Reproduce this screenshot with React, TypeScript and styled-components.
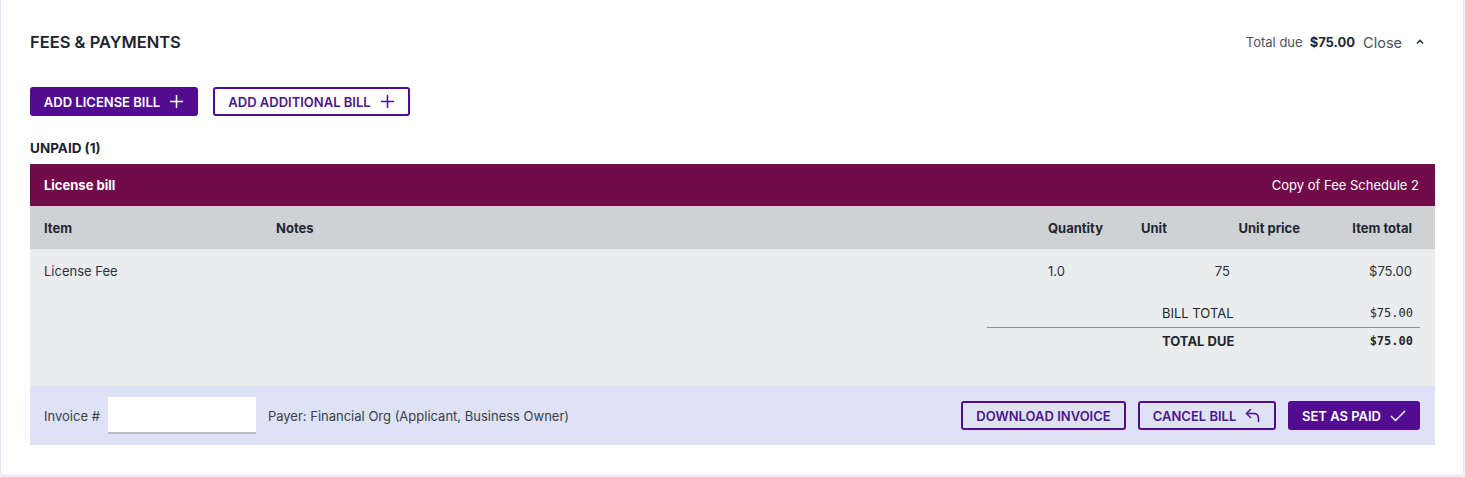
import React from "react";
import styled, { createGlobalStyle } from "styled-components";

const Global = createGlobalStyle`
  html, body { margin: 0; padding: 0; background: #f4f2fb; }
  body { font-family: Inter, "Noto Sans", Arial, sans-serif; color: #1f2733; }
  * { box-sizing: border-box; }
`;

const Card = styled.section`
  width: 1464px;
  height: 476px;
  background: #ffffff;
  border: 1px solid #e7e2f4;
  border-top: none;
  border-radius: 0 0 4px 4px;
  padding: 31px 29px 0 29px;
  display: flex;
  flex-direction: column;
`;

const HeaderRow = styled.div`
  display: flex;
  align-items: center;
  justify-content: space-between;
  height: 22px;
  padding-right: 10px;
`;

const Title = styled.h2`
  margin: 0;
  font-size: 16.5px;
  font-weight: 600;
  color: #1d2430;
`;

const Summary = styled.div`
  display: flex;
  align-items: center;
  gap: 7px;
`;

const SummaryLabel = styled.span`
  font-size: 13px;
  color: #4a525c;
`;

const SummaryValue = styled.span`
  font-size: 13px;
  font-weight: 700;
  color: #1f2733;
`;

const CloseLink = styled.span`
  font-size: 14.5px;
  color: #4a525c;
  display: flex;
  align-items: center;
  gap: 14px;
  margin-left: 1px;
`;

const ActionRow = styled.div`
  display: flex;
  gap: 15px;
  margin-top: 34px;
`;

const Button = styled.button<{ $primary?: boolean; $w: number }>`
  width: ${(p) => p.$w}px;
  height: 29px;
  display: inline-flex;
  align-items: center;
  justify-content: center;
  gap: 9px;
  border-radius: 3px;
  font-family: Inter, "Noto Sans", Arial, sans-serif;
  font-size: 13px;
  font-weight: 600;
  text-transform: uppercase;
  cursor: pointer;
  padding: 0;
  border: 2px solid #520c90;
  background: ${(p) => (p.$primary ? "#520c90" : "transparent")};
  color: ${(p) => (p.$primary ? "#ffffff" : "#4b1687")};
`;

const SectionLabel = styled.div`
  margin-top: 24px;
  font-size: 13.5px;
  font-weight: 700;
  color: #1d2430;
  height: 16px;
  line-height: 16px;
`;

const Table = styled.div`
  margin-top: 8px;
  width: 1405px;
  display: flex;
  flex-direction: column;
`;

const BillHeader = styled.div`
  height: 42px;
  background: #710b4a;
  color: #ffffff;
  display: flex;
  align-items: center;
  justify-content: space-between;
  padding: 0 16px 0 14px;
  font-size: 13px;
`;

const BillName = styled.span`
  font-weight: 700;
`;

const Grid = styled.div<{ $bg: string; $bold?: boolean }>`
  height: 43px;
  background: ${(p) => p.$bg};
  display: grid;
  grid-template-columns: 232px 772px 93px 59px 100px 112px;
  align-items: center;
  padding: 0 22px 0 14px;
  font-size: 13px;
  font-weight: ${(p) => (p.$bold ? 700 : 400)};
  color: ${(p) => (p.$bold ? "#1f2733" : "#2b323c")};
`;

const Cell = styled.span<{ $right?: boolean; $pr?: number }>`
  text-align: ${(p) => (p.$right ? "right" : "left")};
  padding-right: ${(p) => p.$pr ?? 0}px;
  white-space: nowrap;
`;

const TotalsArea = styled.div`
  background: #ebecee;
  height: 94px;
  display: flex;
  justify-content: flex-end;
  padding: 13px 15px 0 0;
`;

const Totals = styled.div`
  width: 433px;
  display: flex;
  flex-direction: column;
`;

const TotalLine = styled.div<{ $strong?: boolean; $divider?: boolean }>`
  display: grid;
  grid-template-columns: 175px auto 1fr;
  align-items: center;
  padding: 0 7px 0 0;
  height: ${(p) => (p.$divider ? 23 : 21)}px;
  align-content: ${(p) => (p.$divider ? "start" : "end")};
  font-size: 13px;
  font-weight: ${(p) => (p.$strong ? 700 : 400)};
  color: #1f2733;
  border-bottom: ${(p) => (p.$divider ? "1px solid #8c9096" : "none")};
`;

const TotalLabel = styled.span`
  grid-column: 2;
  line-height: 16px;
`;

const Money = styled.span`
  grid-column: 3;
  font-family: "DejaVu Sans Mono", "Liberation Mono", monospace;
  font-size: 12px;
  line-height: 16px;
  text-align: right;
`;

const Footer = styled.div`
  height: 59px;
  background: #dde2f6;
  display: flex;
  align-items: center;
  padding: 0 15px 0 14px;
  font-size: 13px;
  color: #3a404a;
`;

const InvoiceInput = styled.input`
  margin-left: 8px;
  width: 148px;
  height: 37px;
  border: none;
  border-bottom: 2px solid #b9bcc2;
  background: #ffffff;
  outline: none;
`;

const Payer = styled.span`
  margin-left: 12px;
  flex: 1;
`;

const FooterActions = styled.div`
  display: flex;
  gap: 12px;
`;

const PlusIcon = () => (
  <svg width="15" height="15" viewBox="0 0 15 15" fill="none" stroke="currentColor" strokeWidth="1.5">
    <path d="M7.5 1v13M1 7.5h13" />
  </svg>
);

const ChevronUp = () => (
  <svg width="8" height="6" viewBox="0 0 8 6" fill="none" stroke="#2b323c" strokeWidth="1.6">
    <path d="M1 4.5L4 1.5L7 4.5" />
  </svg>
);

const UndoIcon = () => (
  <svg width="16" height="15" viewBox="0 0 16 15" fill="none" stroke="currentColor" strokeWidth="1.5" strokeLinecap="round" strokeLinejoin="round">
    <path d="M5.5 1.5L1.5 5.5L5.5 9.5" />
    <path d="M1.5 5.5H8.5C11.5 5.5 13.5 7.5 13.5 10.5V13.5" />
  </svg>
);

const CheckIcon = () => (
  <svg width="16" height="12" viewBox="0 0 16 12" fill="none" stroke="currentColor" strokeWidth="1.4">
    <path d="M1 6L5.5 10.5L15 1" />
  </svg>
);

export default function App() {
  return (
    <>
      <Global />
      <Card>
        <HeaderRow>
          <Title>FEES &amp; PAYMENTS</Title>
          <Summary>
            <SummaryLabel>Total due</SummaryLabel>
            <SummaryValue>$75.00</SummaryValue>
            <CloseLink>
              Close
              <ChevronUp />
            </CloseLink>
          </Summary>
        </HeaderRow>

        <ActionRow>
          <Button $primary $w={168}>
            Add license bill <PlusIcon />
          </Button>
          <Button $w={197}>
            Add additional bill <PlusIcon />
          </Button>
        </ActionRow>

        <SectionLabel>UNPAID (1)</SectionLabel>

        <Table>
          <BillHeader>
            <BillName>License bill</BillName>
            <span>Copy of Fee Schedule 2</span>
          </BillHeader>
          <Grid $bg="#cfd2d5" $bold>
            <Cell>Item</Cell>
            <Cell>Notes</Cell>
            <Cell>Quantity</Cell>
            <Cell>Unit</Cell>
            <Cell $right>Unit price</Cell>
            <Cell $right>Item total</Cell>
          </Grid>
          <Grid $bg="#ebecee">
            <Cell>License Fee</Cell>
            <Cell></Cell>
            <Cell>1.0</Cell>
            <Cell></Cell>
            <Cell $right $pr={70}>75</Cell>
            <Cell $right>$75.00</Cell>
          </Grid>
          <TotalsArea>
            <Totals>
              <TotalLine $divider>
                <TotalLabel>BILL TOTAL</TotalLabel>
                <Money>$75.00</Money>
              </TotalLine>
              <TotalLine $strong>
                <TotalLabel>TOTAL DUE</TotalLabel>
                <Money>$75.00</Money>
              </TotalLine>
            </Totals>
          </TotalsArea>
          <Footer>
            Invoice #
            <InvoiceInput aria-label="Invoice number" />
            <Payer>Payer: Financial Org (Applicant, Business Owner)</Payer>
            <FooterActions>
              <Button $w={165}>Download invoice</Button>
              <Button $w={138}>
                Cancel bill <UndoIcon />
              </Button>
              <Button $primary $w={132}>
                Set as paid <CheckIcon />
              </Button>
            </FooterActions>
          </Footer>
        </Table>
      </Card>
    </>
  );
}
